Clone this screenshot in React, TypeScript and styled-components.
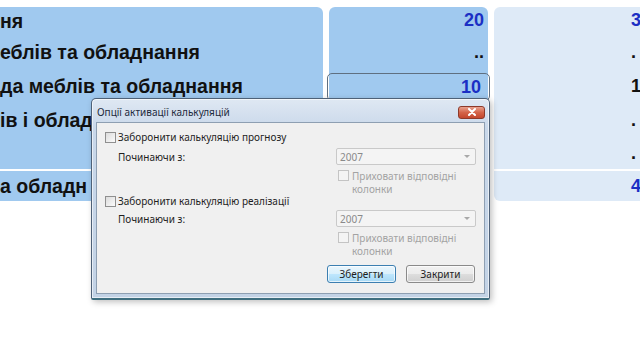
import React from "react";
import styled, { createGlobalStyle } from "styled-components";

const GlobalStyle = createGlobalStyle`
  html, body {
    margin: 0;
    padding: 0;
    background: #ffffff;
    overflow: hidden;
  }
  body {
    width: 640px;
    height: 360px;
    font-family: "Liberation Sans", Arial, sans-serif;
  }
`;

interface IRow {
  label: string;
  mid: string;
  midBlue?: boolean;
  midFocused?: boolean;
  right: string;
  rightBlue?: boolean;
  height: number;
}

const rows: IRow[] = [
  { label: "ня", mid: "20", midBlue: true, right: "3", rightBlue: true, height: 28 },
  { label: "еблів та обладнання", mid: "..", right: ".", height: 34 },
  { label: "да меблів та обладнання", mid: "10", midBlue: true, midFocused: true, right: "1", height: 34 },
  { label: "ів і облад", mid: "", right: ".", height: 34 },
  { label: "", mid: "", right: ".", height: 32 },
  { label: "а обладн", mid: "", right: "4", rightBlue: true, height: 30 },
];

const sections = [
  { title: "Заборонити калькуляцію прогнозу", gap: 4 },
  { title: "Заборонити калькуляцію реалізації", gap: 2 },
];

const App = () => {
  return (
    <>
      <GlobalStyle />
      <Page>
        <Table>
          <Column $bg="#a0c9ef" $width={323}>
            {rows.map((r, i) => (
              <Cell key={i} $height={r.height} $sep={i === 5}>
                <LabelText>{r.label}</LabelText>
              </Cell>
            ))}
          </Column>
          <Column $bg="#a0c9ef" $width={159}>
            {rows.map((r, i) => (
              <NumCell key={i} $height={r.height} $sep={i === 5} $align={i === 0 ? "flex-start" : "center"}>
                {r.midFocused ? (
                  <FocusBox>
                    <NumText $blue={r.midBlue}>{r.mid}</NumText>
                  </FocusBox>
                ) : (
                  <NumText $blue={r.midBlue}>{r.mid}</NumText>
                )}
              </NumCell>
            ))}
          </Column>
          <Column $bg="#deeaf7" $width={160}>
            {rows.map((r, i) => (
              <RightCell key={i} $height={r.height} $sep={i === 5} $align={i === 0 ? "flex-start" : "center"}>
                <NumText $blue={r.rightBlue}>{r.right}</NumText>
              </RightCell>
            ))}
          </Column>
        </Table>

        <Dialog>
          <TitleBar>
            <Title>Опції активації калькуляцій</Title>
            <CloseButton>
              <svg width="10" height="8" viewBox="0 0 10 8">
                <path d="M2 1 L8 7 M8 1 L2 7" stroke="#ffffff" strokeWidth="2" strokeLinecap="round" />
              </svg>
            </CloseButton>
          </TitleBar>
          <Client>
            {sections.map((s) => (
              <Section key={s.title}>
                <CheckRow $gap={s.gap}>
                  <CheckBox />
                  <CheckLabel>{s.title}</CheckLabel>
                </CheckRow>
                <FieldGrid>
                  <FieldLabel>Починаючи з:</FieldLabel>
                  <Select>
                    <span>2007</span>
                    <Arrow />
                  </Select>
                  <span />
                  <HideRow>
                    <CheckBox $disabled />
                    <HideText>
                      Приховати відповідні
                      <br />
                      колонки
                    </HideText>
                  </HideRow>
                </FieldGrid>
              </Section>
            ))}
            <ButtonRow>
              <Button $default>Зберегти</Button>
              <Button>Закрити</Button>
            </ButtonRow>
          </Client>
        </Dialog>
      </Page>
    </>
  );
};

export default App;

const Page = styled.div`
  position: relative;
  width: 640px;
  height: 360px;
  overflow: hidden;
  background: #ffffff;
`;

const Table = styled.div`
  display: flex;
  gap: 6px;
  padding-top: 7px;
`;

const Column = styled.div<{ $bg: string; $width: number }>`
  display: flex;
  flex-direction: column;
  flex: 0 0 ${(p) => p.$width}px;
  background: ${(p) => p.$bg};
  border-radius: 0 6px 6px 0;
  &:nth-child(2) {
    border-radius: 6px;
  }
  &:nth-child(3) {
    border-radius: 6px 0 0 6px;
  }
`;

const Cell = styled.div<{ $height: number; $sep?: boolean }>`
  height: ${(p) => p.$height}px;
  display: flex;
  align-items: center;
  border-top: ${(p) => (p.$sep ? "2px solid #ffffff" : "none")};
  overflow: hidden;
  white-space: nowrap;
`;

const LabelText = styled.span`
  font-size: 19.5px;
  font-weight: 700;
  color: #111111;
`;

const NumCell = styled.div<{ $height: number; $sep?: boolean; $align: string }>`
  height: ${(p) => p.$height}px;
  display: flex;
  align-items: ${(p) => p.$align};
  justify-content: flex-end;
  padding-right: 4px;
  border-top: ${(p) => (p.$sep ? "2px solid #ffffff" : "none")};
`;

const RightCell = styled(NumCell)`
  justify-content: flex-start;
  padding-left: 137px;
  padding-right: 0;
`;

const NumText = styled.span<{ $blue?: boolean }>`
  font-size: 18px;
  font-weight: 700;
  line-height: 26px;
  color: ${(p) => (p.$blue ? "#1b2fc4" : "#111111")};
`;

const FocusBox = styled.div`
  flex: 1;
  margin: 1px -6px 0 -2px;
  height: 28px;
  border: 1px solid #5f6f80;
  border-radius: 5px;
  display: flex;
  align-items: center;
  justify-content: flex-end;
  padding-right: 8px;
  box-sizing: border-box;
`;

const Dialog = styled.div`
  position: absolute;
  left: 91px;
  top: 98px;
  width: 399px;
  height: 202px;
  box-sizing: border-box;
  display: flex;
  flex-direction: column;
  background: linear-gradient(#dfe8f3, #c9d8ea 30px, #c3d3e6);
  border: 1px solid #4e6178;
  border-bottom: 2px solid #3f6f80;
  border-radius: 5px 5px 2px 2px;
  box-shadow: 0 0 0 1px rgba(255, 255, 255, 0.6) inset, 2px 2px 6px rgba(0, 0, 0, 0.25);
  padding: 0 4px 4px 4px;
  font-family: "Noto Sans", "Open Sans", sans-serif;
`;

const TitleBar = styled.div`
  height: 23px;
  display: flex;
  align-items: center;
  justify-content: space-between;
  padding-left: 1px;
`;

const Title = styled.span`
  font-size: 10px;
  line-height: 12px;
  color: #1d2a3c;
  padding-top: 3px;
`;

const CloseButton = styled.div`
  width: 27px;
  height: 13px;
  margin-top: 3px;
  border-radius: 3px;
  border: 1px solid #8d3a2a;
  background: linear-gradient(#e9a28f, #d46449 50%, #c4472d);
  display: flex;
  align-items: center;
  justify-content: center;
  box-sizing: border-box;
`;

const Client = styled.div`
  flex: 1;
  background: #f0f0f0;
  border: 1px solid #8e9fb2;
  padding: 8px 8px 0 8px;
  display: flex;
  flex-direction: column;
`;

const Section = styled.div`
  display: flex;
  flex-direction: column;
  margin-bottom: 1px;
`;

const CheckRow = styled.div<{ $gap: number }>`
  display: flex;
  align-items: center;
  gap: 2px;
  height: 13px;
  margin-bottom: ${(p) => p.$gap}px;
`;

const CheckBox = styled.span<{ $disabled?: boolean }>`
  width: 11px;
  height: 11px;
  box-sizing: border-box;
  border: 1px solid ${(p) => (p.$disabled ? "#c4c4c4" : "#8f8f8f")};
  background: ${(p) => (p.$disabled ? "#f4f4f4" : "linear-gradient(135deg, #dcdcdc, #fbfbfb)")};
  flex: 0 0 auto;
`;

const CheckLabel = styled.span`
  font-size: 10px;
  line-height: 13px;
  color: #1e1e1e;
  white-space: nowrap;
`;

const FieldGrid = styled.div`
  display: grid;
  grid-template-columns: 1fr 140px;
  row-gap: 5px;
  align-items: center;
`;

const FieldLabel = styled.span`
  font-size: 10px;
  line-height: 13px;
  color: #1e1e1e;
  padding-left: 13px;
  padding-top: 2px;
`;

const Select = styled.div`
  height: 17px;
  box-sizing: border-box;
  border: 1px solid #c9c9c9;
  border-radius: 2px;
  background: #f4f4f4;
  display: flex;
  align-items: center;
  justify-content: space-between;
  padding: 0 5px 0 3px;
  font-size: 10px;
  color: #8a8a8a;
`;

const Arrow = styled.span`
  width: 0;
  height: 0;
  border-left: 3px solid transparent;
  border-right: 3px solid transparent;
  border-top: 3px solid #a8a8a8;
`;

const HideRow = styled.div`
  display: flex;
  align-items: flex-start;
  gap: 3px;
  height: 24px;
  padding-left: 2px;
`;

const HideText = styled.span`
  font-size: 10px;
  line-height: 13px;
  color: #a3a3a3;
`;

const ButtonRow = styled.div`
  display: flex;
  justify-content: flex-end;
  gap: 10px;
  padding-right: 1px;
  margin-top: 8px;
`;

const Button = styled.div<{ $default?: boolean }>`
  width: 69px;
  height: 18px;
  box-sizing: border-box;
  display: flex;
  align-items: center;
  justify-content: center;
  font-size: 10px;
  color: #1e1e1e;
  border-radius: 3px;
  border: 1px solid ${(p) => (p.$default ? "#3c7fb1" : "#8a8a8a")};
  background: ${(p) =>
    p.$default
      ? "linear-gradient(#eaf6fd, #d9f0fc 50%, #bee6fd 51%, #a7d9f5)"
      : "linear-gradient(#f2f2f2, #ebebeb 50%, #dddddd 51%, #cfcfcf)"};
  box-shadow: inset 0 0 0 1px rgba(255, 255, 255, 0.7);
`;
